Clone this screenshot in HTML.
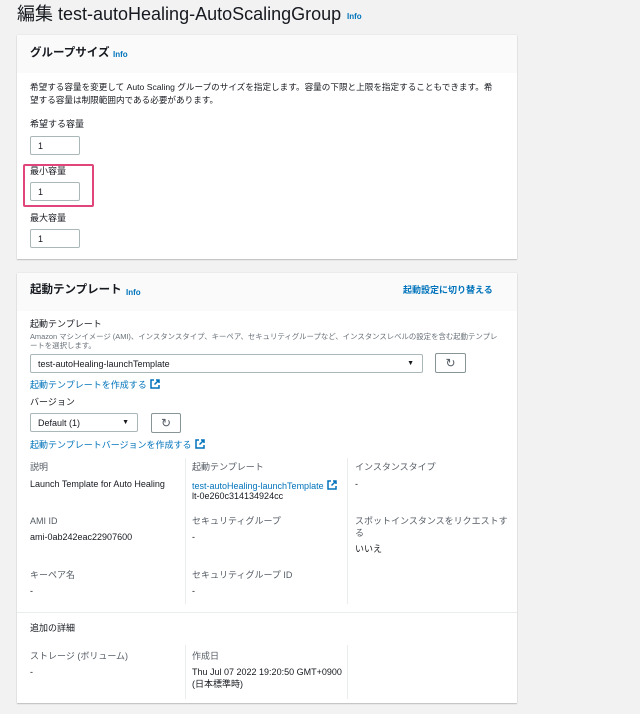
<!DOCTYPE html>
<html><head><meta charset="utf-8"><style>
*{margin:0;padding:0;box-sizing:border-box}
body{width:640px;height:714px;background:#f2f2f2;position:relative;overflow:hidden;font-family:"Liberation Sans","Noto Sans CJK JP",sans-serif;color:#16191f}
.a{position:absolute;white-space:nowrap;line-height:1}
.panel{position:absolute;left:17px;width:500px;background:#fff;box-shadow:0 1px 1px rgba(0,0,0,.2),0 0 1px rgba(0,0,0,.15)}
.hd{position:absolute;left:0;top:0;width:100%;height:38px;background:#fafafa}
.info{color:#0073bb;font-weight:bold;font-size:8px}
.lbl{font-size:9px;color:#545b64}
.lb2{font-size:9px;color:#16191f}
.val{font-size:9px;color:#16191f}
.inp{position:absolute;border:1px solid #aab7b8;background:#fff;border-radius:2px;font-size:9px;padding-left:7px;display:flex;align-items:center}
.btn{position:absolute;border:1px solid #879596;background:#fff;border-radius:2px;display:flex;align-items:center;justify-content:center}
.link{color:#0073bb;font-size:9px}
.ext{display:inline-block;vertical-align:-1px;margin-left:3px}
.vl{position:absolute;width:1px;background:#eaeded}
</style></head><body>
<div class="a" style="left:17px;top:5px;font-size:18px;color:#16191f">編集 test-autoHealing-AutoScalingGroup</div>
<div class="a info" style="left:347px;top:13px;font-size:8px">Info</div>

<div class="panel" style="top:35px;height:224px">
 <div class="hd"></div>
 <div class="a" style="left:13px;top:13px;font-size:11.5px;font-weight:bold">グループサイズ</div>
 <div class="a info" style="left:96px;top:16px">Info</div>
 <div class="a val" style="left:13px;top:48px;font-size:8.6px">希望する容量を変更して Auto Scaling グループのサイズを指定します。容量の下限と上限を指定することもできます。希</div>
 <div class="a val" style="left:13px;top:61px;font-size:8.6px">望する容量は制限範囲内である必要があります。</div>
 <div class="a lb2" style="left:13px;top:85px">希望する容量</div>
 <div class="inp" style="left:13px;top:101px;width:50px;height:19px">1</div>
 <div style="position:absolute;left:6px;top:129px;width:71px;height:43px;border:2px solid #e0457b;border-radius:2px"></div>
 <div class="a lb2" style="left:13px;top:132px">最小容量</div>
 <div class="inp" style="left:13px;top:147px;width:50px;height:19px">1</div>
 <div class="a lb2" style="left:13px;top:179px">最大容量</div>
 <div class="inp" style="left:13px;top:194px;width:50px;height:19px">1</div>
</div>

<div class="panel" style="top:273px;height:430px">
 <div class="hd"></div>
 <div class="a" style="left:13px;top:12px;font-size:11.5px;font-weight:bold">起動テンプレート</div>
 <div class="a info" style="left:109px;top:16px">Info</div>
 <div class="a link" style="left:386px;top:13px;font-weight:bold">起動設定に切り替える</div>
 <div class="a lb2" style="left:13px;top:47px">起動テンプレート</div>
 <div class="a" style="left:13px;top:60px;font-size:7.4px;color:#687078">Amazon マシンイメージ (AMI)、インスタンスタイプ、キーペア、セキュリティグループなど、インスタンスレベルの設定を含む起動テンプレ</div>
 <div class="a" style="left:13px;top:69px;font-size:7.4px;color:#687078">ートを選択します。</div>
 <div class="inp" style="left:13px;top:81px;width:393px;height:19px">test-autoHealing-launchTemplate<span style="position:absolute;right:8px;font-size:7px">▼</span></div>
 <div class="btn" style="left:418px;top:80px;width:31px;height:20px;font-size:12px;color:#545b64">↻</div>
 <div class="a link" style="left:13px;top:106px">起動テンプレートを作成する<svg class="ext" width="10" height="10" viewBox="0 0 10 10"><path d="M4 1H1v8h8V6M6 1h3v3M9 1L4.5 5.5" fill="none" stroke="#0073bb" stroke-width="1.5"/></svg></div>
 <div class="a lb2" style="left:13px;top:125px">バージョン</div>
 <div class="inp" style="left:13px;top:140px;width:108px;height:19px">Default (1)<span style="position:absolute;right:8px;font-size:7px">▼</span></div>
 <div class="btn" style="left:134px;top:140px;width:30px;height:20px;font-size:12px;color:#545b64">↻</div>
 <div class="a link" style="left:13px;top:166px">起動テンプレートバージョンを作成する<svg class="ext" width="10" height="10" viewBox="0 0 10 10"><path d="M4 1H1v8h8V6M6 1h3v3M9 1L4.5 5.5" fill="none" stroke="#0073bb" stroke-width="1.5"/></svg></div>

 <div class="vl" style="left:168px;top:185px;height:146px"></div>
 <div class="vl" style="left:330px;top:185px;height:146px"></div>
 <div class="a lbl" style="left:13px;top:190px">説明</div>
 <div class="a val" style="left:13px;top:207px">Launch Template for Auto Healing</div>
 <div class="a lbl" style="left:175px;top:190px">起動テンプレート</div>
 <div class="a link" style="left:175px;top:207px">test-autoHealing-launchTemplate<svg class="ext" width="10" height="10" viewBox="0 0 10 10"><path d="M4 1H1v8h8V6M6 1h3v3M9 1L4.5 5.5" fill="none" stroke="#0073bb" stroke-width="1.5"/></svg></div>
 <div class="a val" style="left:175px;top:219px">lt-0e260c314134924cc</div>
 <div class="a lbl" style="left:338px;top:190px">インスタンスタイプ</div>
 <div class="a val" style="left:338px;top:207px">-</div>
 <div class="a lbl" style="left:13px;top:244px">AMI ID</div>
 <div class="a val" style="left:13px;top:260px">ami-0ab242eac22907600</div>
 <div class="a lbl" style="left:175px;top:244px">セキュリティグループ</div>
 <div class="a val" style="left:175px;top:260px">-</div>
 <div class="a lbl" style="left:338px;top:244px">スポットインスタンスをリクエストす</div>
 <div class="a lbl" style="left:338px;top:256px">る</div>
 <div class="a val" style="left:338px;top:272px">いいえ</div>
 <div class="a lbl" style="left:13px;top:298px">キーペア名</div>
 <div class="a val" style="left:13px;top:314px">-</div>
 <div class="a lbl" style="left:175px;top:298px">セキュリティグループ ID</div>
 <div class="a val" style="left:175px;top:314px">-</div>
 <div style="position:absolute;left:0;top:339px;width:100%;height:1px;background:#eaeded"></div>
 <div class="a lbl" style="left:13px;top:351px;color:#16191f">追加の詳細</div>
 <div class="vl" style="left:168px;top:372px;height:54px"></div>
 <div class="vl" style="left:330px;top:372px;height:54px"></div>
 <div class="a lbl" style="left:13px;top:379px">ストレージ (ボリューム)</div>
 <div class="a val" style="left:13px;top:395px">-</div>
 <div class="a lbl" style="left:175px;top:379px">作成日</div>
 <div class="a val" style="left:175px;top:395px">Thu Jul 07 2022 19:20:50 GMT+0900</div>
 <div class="a val" style="left:175px;top:407px">(日本標準時)</div>
</div>
</body></html>
